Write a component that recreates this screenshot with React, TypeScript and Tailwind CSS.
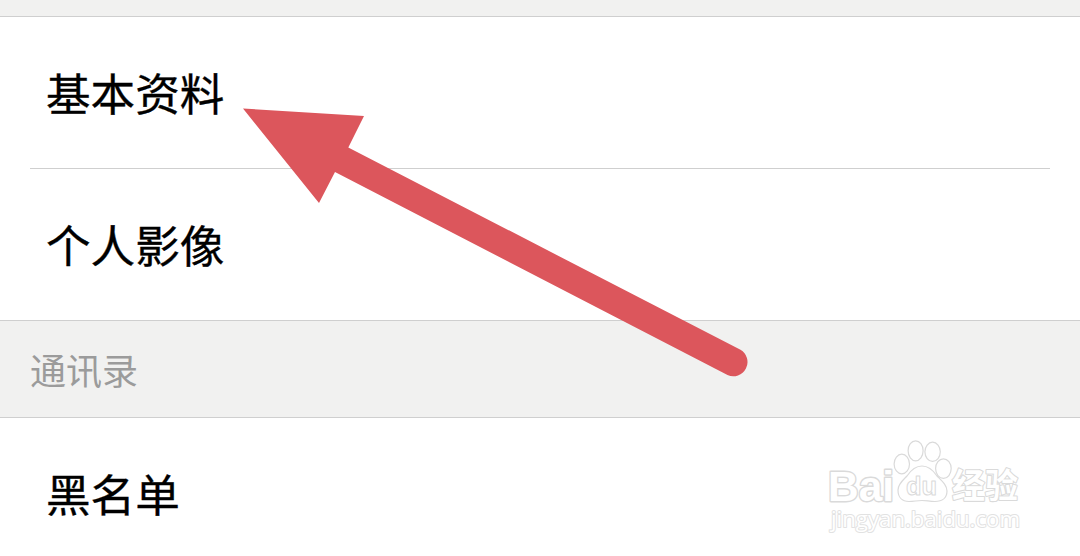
interface SettingsRowProps {
  label: string;
  inset?: boolean;
}

function SettingsRow({ label, inset }: SettingsRowProps) {
  return (
    <div className="bg-white">
      <div className="flex h-[151px] items-center pb-px pl-[46px]">
        <span className="text-[44.6px] leading-none text-black [-webkit-text-stroke:0.35px_#000]">{label}</span>
      </div>
      <div className={inset ? "mx-[30px] h-px bg-[#cfcfcf]" : "h-px bg-[#cfcfcf]"} />
    </div>
  );
}

function PointerArrow() {
  return (
    <svg className="pointer-events-none absolute left-[240px] top-[100px]" width="520" height="290" viewBox="240 100 520 290">
      <path
        d="M243 108.5 L364 116 L348.3 147.5 L740.5 349.8 A14.2 14.2 0 0 1 727.5 375 L335 172 L319 203 Z"
        fill="#dc565c"
      />
    </svg>
  );
}

// White lettering with a thin grey rim so it stays readable on white
function Watermark() {
  return (
    <svg
      className="pointer-events-none absolute left-[820px] top-[434px]"
      width="210"
      height="104"
      viewBox="820 434 210 104"
      fill="#ffffff"
      stroke="#dadada"
      strokeWidth="1.2"
      strokeLinejoin="round"
      fontFamily="'Liberation Sans', 'Noto Sans CJK SC', sans-serif"
      fontWeight="700"
    >
      <g paintOrder="stroke">
        <text x="828" y="500.500" fontSize="43" textLength="66" lengthAdjust="spacingAndGlyphs" strokeWidth="2.8">Bai</text>
        <text x="952" y="498" fontSize="34" textLength="66" lengthAdjust="spacingAndGlyphs" fontFamily="'Noto Sans CJK SC', sans-serif" strokeWidth="2.2">经验</text>
        <text x="831" y="527" fontSize="22" textLength="189" lengthAdjust="spacingAndGlyphs" fontFamily="'Open Sans', sans-serif" fontWeight="400" stroke="#e2e2e2" strokeWidth="2">jingyan.baidu.com</text>
      </g>
      <ellipse cx="901.8" cy="464" rx="7.7" ry="9.8" />
      <ellipse cx="915.6" cy="450.8" rx="7.5" ry="10" />
      <ellipse cx="932.6" cy="451.8" rx="7.7" ry="9.6" />
      <ellipse cx="943.4" cy="468.6" rx="7.8" ry="9.8" />
      <path d="M922 466 C929 466 933 470 937 476 C942 481 947 485 947 491 C947 498 942 501.500 935 501.500 C929 501.500 927 500.500 922 500.500 C917 500.500 914 501.500 909 501.500 C902 501.500 898 497 898 490 C898 484 903 480 907 476 C911 470 915 466 922 466 Z" />
      <text x="906" y="494.500" fontSize="26" textLength="31" lengthAdjust="spacingAndGlyphs" strokeWidth="1">du</text>
    </svg>
  );
}

export default function App() {
  return (
    <div className="relative h-[556px] w-[1080px] overflow-hidden bg-white font-['Noto_Sans_CJK_SC',sans-serif]">
      <div className="h-[17px] border-b border-[#cfcfcf] bg-[#f1f1f0]" />
      <SettingsRow label="基本资料" inset />
      <SettingsRow label="个人影像" />
      <div className="flex h-[97px] items-center border-b border-[#cfcfcf] bg-[#f1f1f0] pb-px pl-[30px]">
        <span className="text-[36px] leading-none text-[#9b9b9b]">通讯录</span>
      </div>
      <SettingsRow label="黑名单" />
      <PointerArrow />
      <Watermark />
    </div>
  );
}
